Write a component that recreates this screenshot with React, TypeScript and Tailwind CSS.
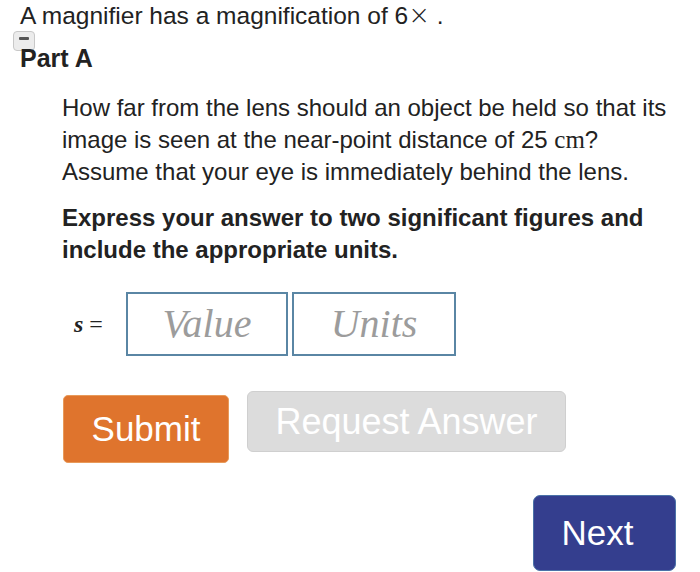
import React from "react";

const serif = { fontFamily: '"Liberation Serif", serif' };

const App = () => {
  return (
    <div
      className="relative w-[700px] h-[572px] bg-white text-[#222] overflow-hidden"
      style={{ fontFamily: '"Liberation Sans", Arial, sans-serif' }}
    >
      <div className="pl-[20px] pt-[2px] text-[24.5px] leading-[28px] h-[30px]">
        A magnifier has a magnification of 6
        <span
          className="text-[26px] leading-none font-extralight"
          style={{ fontFamily: '"DejaVu Sans", sans-serif' }}
        >
          ×
        </span>{" "}
        .
      </div>

      <div className="relative pl-[20px] mt-[13px] h-[30px]">
        <div className="absolute left-[13px] top-[-12px] w-[22px] h-[20px] rounded-[4px] border border-[#c8c8c8] bg-[#ececec] flex items-start justify-center pt-[5px]">
          <div className="w-[10px] h-[3px] bg-[#555] rounded-[1px]" />
        </div>
        <h2 className="relative text-[25px] leading-[30px] font-bold text-[#222]">Part A</h2>
      </div>

      <div className="pl-[62px] pr-[4px] mt-[19px] text-[24px] leading-[32px]">
        <p>
          <span className="block">How far from the lens should an object be held so that its</span>
          <span className="block">
            image is seen at the near-point distance of 25{" "}
            <span style={serif} className="text-[25px]">
              cm
            </span>
            ?
          </span>
          <span className="block">Assume that your eye is immediately behind the lens.</span>
        </p>
        <p className="mt-[14px] font-bold">
          <span className="block">Express your answer to two significant figures and</span>
          <span className="block">include the appropriate units.</span>
        </p>
      </div>

      <div className="flex items-center mt-[26px] pl-[74px]">
        <span className="text-[24px] w-[52px]" style={serif}>
          <span className="italic font-bold">s</span> =
        </span>
        <div className="flex gap-[4px]">
          <div
            className="w-[162px] h-[64px] border-2 border-[#5a86a4] flex items-center justify-center text-[40px] italic text-[#9c9c9c]"
            style={serif}
          >
            Value
          </div>
          <div
            className="w-[164px] h-[64px] border-2 border-[#5a86a4] flex items-center justify-center text-[40px] italic text-[#9c9c9c]"
            style={serif}
          >
            Units
          </div>
        </div>
      </div>

      <div className="flex items-start pl-[63px] mt-[35px] gap-[18px]">
        <button className="mt-[4px] w-[166px] h-[68px] rounded-[5px] bg-[#df742d] border border-[#e89a5a] text-white text-[35px]">
          Submit
        </button>
        <button className="w-[319px] h-[61px] rounded-[6px] bg-[#dcdcdc] border border-[#cfcfcf] text-white text-[36px]">
          Request Answer
        </button>
      </div>

      <div className="flex justify-end pr-[24px] mt-[32px]">
        <button className="w-[143px] h-[76px] rounded-[7px] bg-[#343e8e] border border-[#4a72a8] text-white text-[35px] pr-[14px]">
          Next
        </button>
      </div>
    </div>
  );
};

export default App;
